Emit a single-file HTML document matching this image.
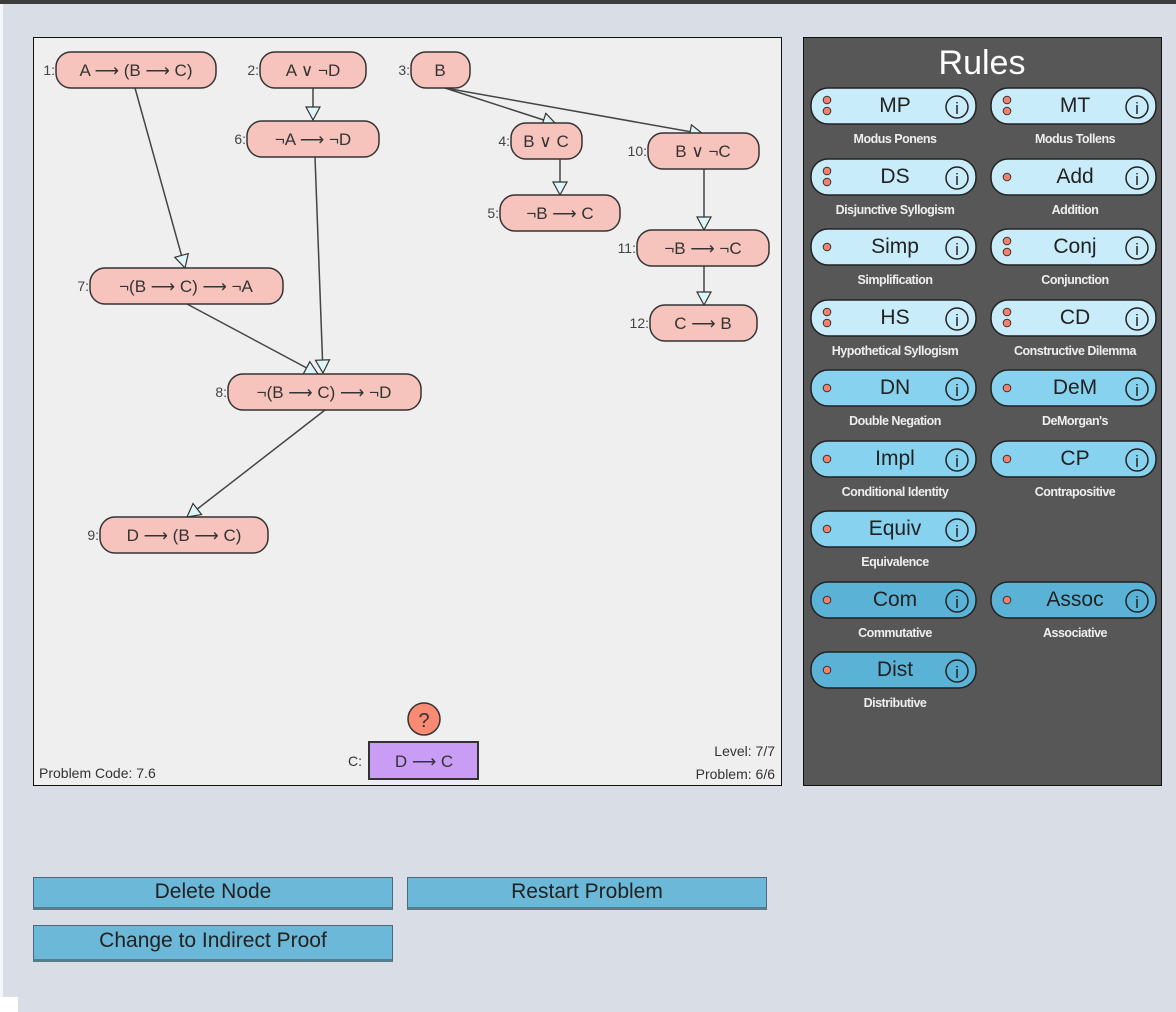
<!DOCTYPE html>
<html><head><meta charset="utf-8"><style>
html,body{margin:0;padding:0}
body{width:1176px;height:1012px;background:#d8dde6;position:relative;overflow:hidden;font-family:"Liberation Sans",sans-serif}
.btn{position:absolute;height:33px;background:#6bb8d8;border:1px solid #4a6878;border-bottom:3px solid #5a7d8c;box-sizing:border-box;font-size:21px;color:#222;text-align:center;line-height:27px}
</style></head><body>
<div style="position:absolute;left:0;top:0;width:1176px;height:4px;background:#3c3c3c"></div>
<div style="position:absolute;left:0;top:4px;width:3px;height:1008px;background:#f4f6f9"></div>
<div style="position:absolute;left:0;top:997px;width:18px;height:15px;background:#fff"></div>
<svg width="1176" height="1012" style="position:absolute;left:0;top:0" font-family="Liberation Sans, sans-serif">
<defs>
<marker id="ar" markerWidth="16" markerHeight="16" refX="14" refY="8" orient="auto" markerUnits="userSpaceOnUse">
<path d="M1,1 L14,8 L1,15 Z" fill="#dff6f8" stroke="#333" stroke-width="1.2"/>
</marker>
</defs>
<rect x="33.5" y="37.5" width="748" height="748" fill="#efefef" stroke="#111" stroke-width="1"/>
<g stroke="#444" stroke-width="1.5" fill="none" marker-end="url(#ar)">
<line x1="135" y1="88" x2="185" y2="268"/>
<line x1="313" y1="88" x2="313" y2="120"/>
<line x1="445" y1="88" x2="556" y2="124"/>
<line x1="445" y1="88" x2="703" y2="134"/>
<line x1="560" y1="159" x2="560" y2="195"/>
<line x1="704" y1="169" x2="704" y2="230"/>
<line x1="704" y1="266" x2="704" y2="305"/>
<line x1="315" y1="157" x2="323" y2="373"/>
<line x1="187" y1="304" x2="318" y2="374"/>
<line x1="325" y1="410" x2="187" y2="517"/>
</g>
<g fill="#f6c4bc" stroke="#333" stroke-width="1.5">
<rect x="56" y="52" width="160" height="36" rx="15"/>
<rect x="260" y="52" width="106" height="36" rx="15"/>
<rect x="411" y="52" width="59" height="36" rx="15"/>
<rect x="247" y="121" width="132" height="36" rx="15"/>
<rect x="511" y="123" width="71" height="36" rx="15"/>
<rect x="648" y="133" width="111" height="36" rx="15"/>
<rect x="500" y="195" width="120" height="36" rx="15"/>
<rect x="637" y="230" width="132" height="36" rx="15"/>
<rect x="650" y="305" width="107" height="36" rx="15"/>
<rect x="90" y="268" width="193" height="36" rx="15"/>
<rect x="228" y="374" width="193" height="36" rx="15"/>
<rect x="100" y="517" width="168" height="36" rx="15"/>
</g>
<g font-size="17" fill="#333" text-anchor="middle">
<text x="136" y="76">A ⟶ (B ⟶ C)</text>
<text x="313" y="76">A ∨ ¬D</text>
<text x="440" y="76">B</text>
<text x="313" y="145">¬A ⟶ ¬D</text>
<text x="546" y="147">B ∨ C</text>
<text x="703" y="157">B ∨ ¬C</text>
<text x="560" y="219">¬B ⟶ C</text>
<text x="703" y="254">¬B ⟶ ¬C</text>
<text x="703" y="329">C ⟶ B</text>
<text x="186" y="292">¬(B ⟶ C) ⟶ ¬A</text>
<text x="324" y="398">¬(B ⟶ C) ⟶ ¬D</text>
<text x="184" y="541">D ⟶ (B ⟶ C)</text>
</g>
<g font-size="14" fill="#444" text-anchor="end">
<text x="55" y="75">1:</text><text x="259" y="75">2:</text><text x="410" y="75">3:</text>
<text x="246" y="144">6:</text><text x="510" y="146">4:</text><text x="647" y="156">10:</text>
<text x="499" y="218">5:</text><text x="636" y="253">11:</text><text x="649" y="328">12:</text>
<text x="89" y="291">7:</text><text x="227" y="397">8:</text><text x="99" y="540">9:</text>
</g>
<circle cx="424" cy="719" r="16" fill="#f98a74" stroke="#333" stroke-width="1.5"/>
<text x="424" y="727" font-size="20" fill="#333" text-anchor="middle">?</text>
<rect x="369" y="742" width="109" height="37" fill="#c99cf6" stroke="#333" stroke-width="2"/>
<text x="424" y="767" font-size="17" fill="#333" text-anchor="middle">D ⟶ C</text>
<text x="348" y="766" font-size="14" fill="#333">C:</text>
<text x="39" y="778" font-size="14" fill="#333">Problem Code: 7.6</text>
<text x="775" y="756" font-size="14" fill="#333" text-anchor="end">Level: 7/7</text>
<text x="775" y="779" font-size="14" fill="#333" text-anchor="end">Problem: 6/6</text>

<rect x="803.5" y="37.5" width="358" height="748" fill="#575757" stroke="#111" stroke-width="1"/>
<text x="982" y="74" font-size="34" fill="#fff" text-anchor="middle">Rules</text>
<g id="rules" stroke-width="1.5">
</g>
</svg>
<script>
var R=[
[811,88,'MP','Modus Ponens',2,'#c9ecfa'],[991,88,'MT','Modus Tollens',2,'#c9ecfa'],
[811,159,'DS','Disjunctive Syllogism',2,'#c9ecfa'],[991,159,'Add','Addition',1,'#c9ecfa'],
[811,229,'Simp','Simplification',1,'#c9ecfa'],[991,229,'Conj','Conjunction',2,'#c9ecfa'],
[811,300,'HS','Hypothetical Syllogism',2,'#c9ecfa'],[991,300,'CD','Constructive Dilemma',2,'#c9ecfa'],
[811,370,'DN','Double Negation',1,'#87d2ee'],[991,370,'DeM',"DeMorgan's",1,'#87d2ee'],
[811,441,'Impl','Conditional Identity',1,'#87d2ee'],[991,441,'CP','Contrapositive',1,'#87d2ee'],
[811,511,'Equiv','Equivalence',1,'#87d2ee'],
[811,582,'Com','Commutative',1,'#5ab3d6'],[991,582,'Assoc','Associative',1,'#5ab3d6'],
[811,652,'Dist','Distributive',1,'#5ab3d6']];
var s='';
R.forEach(function(r){var x=r[0],y=r[1];
s+='<rect x="'+x+'" y="'+y+'" width="165" height="36" rx="17" fill="'+r[5]+'" stroke="#222" stroke-width="1.5"/>';
if(r[4]==2){s+='<circle cx="'+(x+16)+'" cy="'+(y+12)+'" r="3.8" fill="#f5806c" stroke="#333" stroke-width="1"/><circle cx="'+(x+16)+'" cy="'+(y+23)+'" r="3.8" fill="#f5806c" stroke="#333" stroke-width="1"/>';}
else s+='<circle cx="'+(x+16)+'" cy="'+(y+18)+'" r="3.8" fill="#f5806c" stroke="#333" stroke-width="1"/>';
s+='<text x="'+(x+84)+'" y="'+(y+24)+'" font-size="21" fill="#222" text-anchor="middle">'+r[2]+'</text>';
s+='<circle cx="'+(x+146)+'" cy="'+(y+19)+'" r="11" fill="none" stroke="#222" stroke-width="1.5"/>';
s+='<text x="'+(x+146)+'" y="'+(y+26)+'" font-size="17" fill="#222" text-anchor="middle">i</text>';
s+='<text x="'+(x+84)+'" y="'+(y+55)+'" font-size="12.5" font-weight="bold" fill="#eee" text-anchor="middle" letter-spacing="-0.5">'+r[3].replace("'","&#39;")+'</text>';
});
document.getElementById('rules').innerHTML=s;
</script>
<div class="btn" style="left:33px;top:877px;width:360px">Delete Node</div>
<div class="btn" style="left:407px;top:877px;width:360px">Restart Problem</div>
<div class="btn" style="left:33px;top:925px;width:360px;height:37px;line-height:30px">Change to Indirect Proof</div>
</body></html>
